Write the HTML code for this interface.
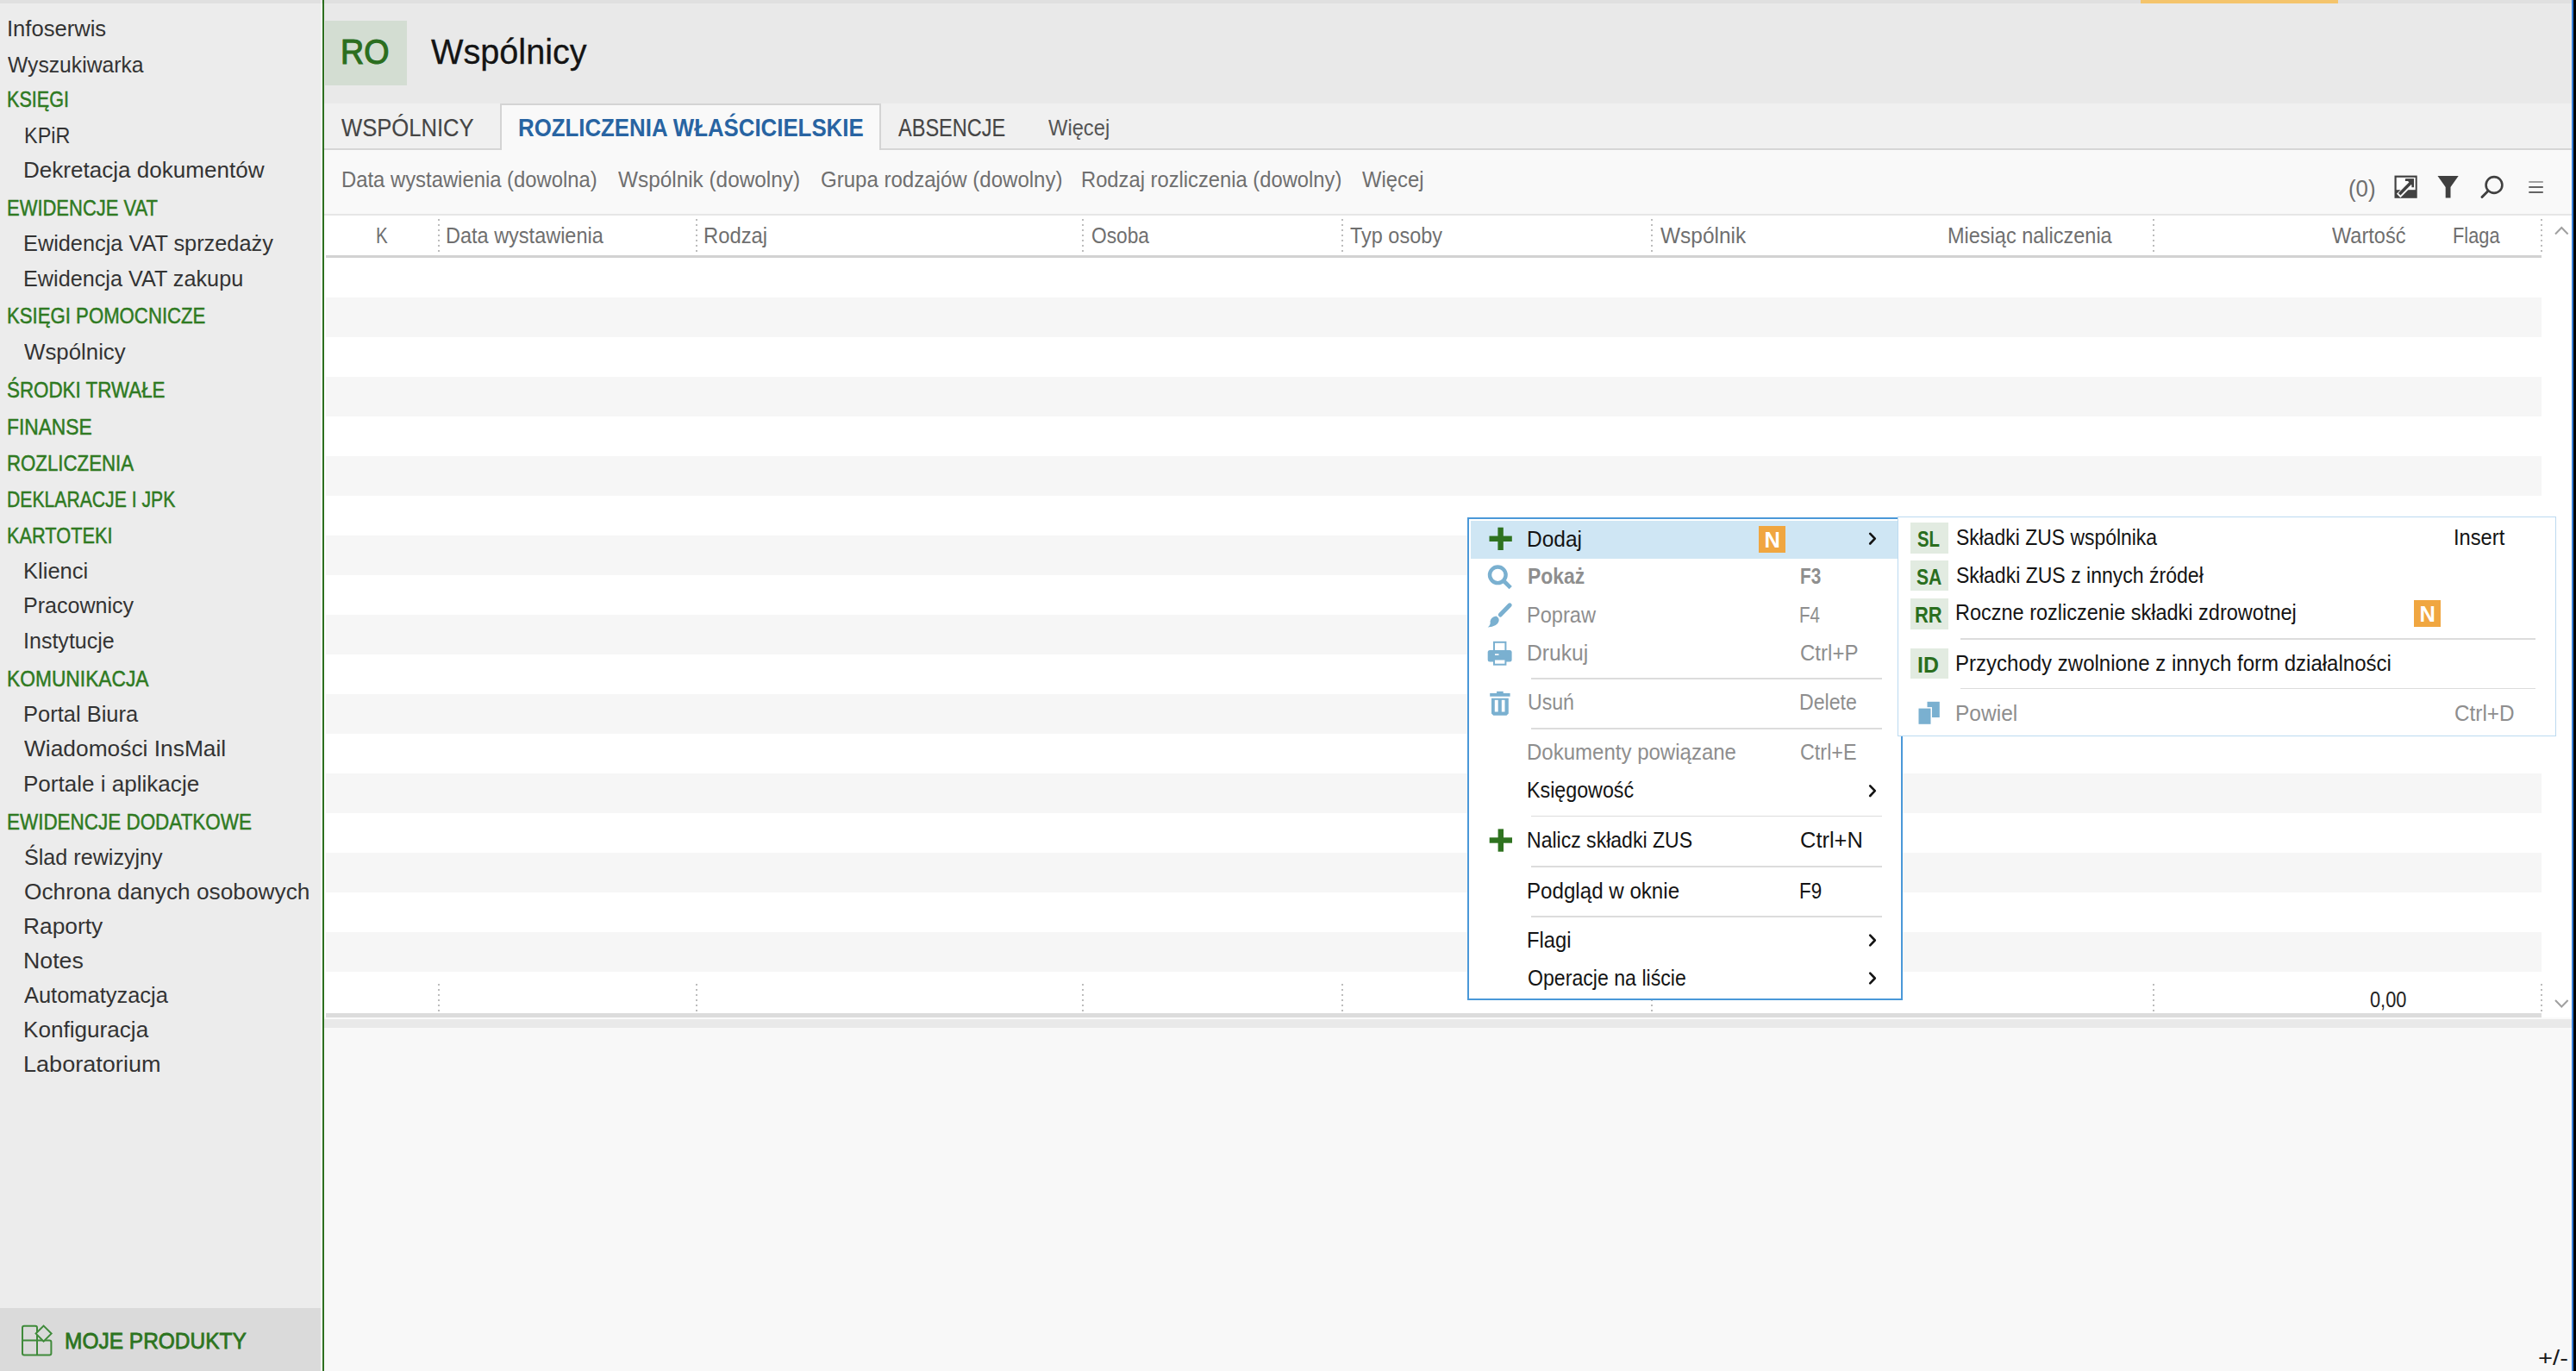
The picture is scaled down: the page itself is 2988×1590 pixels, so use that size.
<!DOCTYPE html>
<html><head><meta charset="utf-8"><title>Wspólnicy</title>
<style>
html,body{margin:0;padding:0;}
body{width:2988px;height:1590px;position:relative;overflow:hidden;background:#f8f8f8;font-family:"Liberation Sans", sans-serif;}
.b{position:absolute;}
.t{position:absolute;white-space:nowrap;transform-origin:0 0;}
svg{position:absolute;overflow:visible;}
</style></head><body>
<!-- sidebar -->
<div class="b" style="left:0;top:0;width:373px;height:1590px;background:#ececec"></div>
<div class="b" style="left:0;top:1517px;width:373px;height:73px;background:#dadada"></div>
<!-- top strip -->
<div class="b" style="left:0;top:0;width:2988px;height:3.5px;background:#e0e0e0"></div>
<!-- header -->
<div class="b" style="left:376px;top:3.5px;width:2607px;height:116.5px;background:#e9e9e9"></div>
<div class="b" style="left:2483px;top:0;width:229px;height:4px;background:#f4c46c"></div>
<div class="b" style="left:376.5px;top:23.7px;width:95.3px;height:75.6px;background:#d3ddd2"></div>
<!-- tab strip -->
<div class="b" style="left:376px;top:120px;width:2607px;height:52px;background:#f0f0f0"></div>
<div class="b" style="left:376px;top:172px;width:2607px;height:2px;background:#d6d6d6"></div>
<div class="b" style="left:579.8px;top:119.8px;width:438px;height:54.2px;background:#f9f9f9;border:2.2px solid #d4d4d4;border-bottom:none"></div>
<!-- filter row -->
<div class="b" style="left:376px;top:174px;width:2607px;height:74.5px;background:#f9f9f9"></div>
<div class="b" style="left:376px;top:247.8px;width:2607px;height:2px;background:#e6e6e6"></div>
<!-- table -->
<div class="b" style="left:376px;top:249.7px;width:2607px;height:930px;background:#ffffff"></div>
<div class="b" style="left:378px;top:296.2px;width:2570px;height:2.4px;background:#d2d2d2"></div>
<div class="b" style="left:378px;top:344.62px;width:2570px;height:46.02px;background:#f6f6f6"></div>
<div class="b" style="left:378px;top:436.67px;width:2570px;height:46.02px;background:#f6f6f6"></div>
<div class="b" style="left:378px;top:528.71px;width:2570px;height:46.02px;background:#f6f6f6"></div>
<div class="b" style="left:378px;top:620.76px;width:2570px;height:46.02px;background:#f6f6f6"></div>
<div class="b" style="left:378px;top:712.80px;width:2570px;height:46.02px;background:#f6f6f6"></div>
<div class="b" style="left:378px;top:804.84px;width:2570px;height:46.02px;background:#f6f6f6"></div>
<div class="b" style="left:378px;top:896.89px;width:2570px;height:46.02px;background:#f6f6f6"></div>
<div class="b" style="left:378px;top:988.93px;width:2570px;height:46.02px;background:#f6f6f6"></div>
<div class="b" style="left:378px;top:1080.98px;width:2570px;height:46.02px;background:#f6f6f6"></div>
<div class="b" style="left:378px;top:1175.4px;width:2570px;height:4.3px;background:#dcdcdc"></div>
<div class="b" style="left:376px;top:1179.7px;width:2607px;height:2.4px;background:#fafafa"></div>
<div class="b" style="left:376px;top:1182.1px;width:2607px;height:9.5px;background:#e9e9e9"></div>
<div class="b" style="left:507.8px;top:254px;width:2px;height:38px;background:repeating-linear-gradient(#bcbcbc 0 2px, transparent 2px 6px)"></div>
<div class="b" style="left:507.8px;top:1141px;width:2px;height:36px;background:repeating-linear-gradient(#bcbcbc 0 2px, transparent 2px 6px)"></div>
<div class="b" style="left:807.3px;top:254px;width:2px;height:38px;background:repeating-linear-gradient(#bcbcbc 0 2px, transparent 2px 6px)"></div>
<div class="b" style="left:807.3px;top:1141px;width:2px;height:36px;background:repeating-linear-gradient(#bcbcbc 0 2px, transparent 2px 6px)"></div>
<div class="b" style="left:1255.1px;top:254px;width:2px;height:38px;background:repeating-linear-gradient(#bcbcbc 0 2px, transparent 2px 6px)"></div>
<div class="b" style="left:1255.1px;top:1141px;width:2px;height:36px;background:repeating-linear-gradient(#bcbcbc 0 2px, transparent 2px 6px)"></div>
<div class="b" style="left:1555.8px;top:254px;width:2px;height:38px;background:repeating-linear-gradient(#bcbcbc 0 2px, transparent 2px 6px)"></div>
<div class="b" style="left:1555.8px;top:1141px;width:2px;height:36px;background:repeating-linear-gradient(#bcbcbc 0 2px, transparent 2px 6px)"></div>
<div class="b" style="left:1915.4px;top:254px;width:2px;height:38px;background:repeating-linear-gradient(#bcbcbc 0 2px, transparent 2px 6px)"></div>
<div class="b" style="left:1915.4px;top:1141px;width:2px;height:36px;background:repeating-linear-gradient(#bcbcbc 0 2px, transparent 2px 6px)"></div>
<div class="b" style="left:2497.3px;top:254px;width:2px;height:38px;background:repeating-linear-gradient(#bcbcbc 0 2px, transparent 2px 6px)"></div>
<div class="b" style="left:2497.3px;top:1141px;width:2px;height:36px;background:repeating-linear-gradient(#bcbcbc 0 2px, transparent 2px 6px)"></div>
<div class="b" style="left:2947.4px;top:254px;width:2px;height:38px;background:repeating-linear-gradient(#bcbcbc 0 2px, transparent 2px 6px)"></div>
<div class="b" style="left:2947.4px;top:1141px;width:2px;height:36px;background:repeating-linear-gradient(#bcbcbc 0 2px, transparent 2px 6px)"></div>
<div class="b" style="left:371.8px;top:0;width:1px;height:1590px;background:#fbf5fb"></div><div class="b" style="left:373.8px;top:0;width:2.6px;height:1590px;background:#2d6f1f"></div>
<div class="b" style="left:2983px;top:0;width:2.3px;height:1590px;background:#3a80d8"></div>
<div class="b" style="left:2985.3px;top:0;width:2.7px;height:1590px;background:#000"></div>
<!-- scroll chevrons -->
<svg style="left:0;top:0" width="2988" height="1590"><polyline points="2964,271.5 2971.3,264 2978.6,271.5" fill="none" stroke="#a0a0a0" stroke-width="2"/><polyline points="2964,1160 2971.3,1167.5 2978.6,1160" fill="none" stroke="#a0a0a0" stroke-width="2"/></svg>
<!-- toolbar icons -->
<svg style="left:0;top:0" width="2988" height="1590">
  <rect x="2777.5" y="203.6" width="26.2" height="26.2" fill="#424242"/>
  <rect x="2779.7" y="205.8" width="22" height="14.4" fill="#ffffff"/>
  <path d="M2782.2,227 L2797.5,211.5" stroke="#ffffff" stroke-width="6.2"/>
  <path d="M2783.2,225.2 L2797.3,211" stroke="#424242" stroke-width="3.6"/>
  <path d="M2789.9,208.6 L2798.7,208.6 L2798.7,217.3" fill="none" stroke="#424242" stroke-width="2.6"/>
  <path d="M2790.5,207.4 L2799.9,207.4 L2799.9,216.8 Z" fill="#424242"/>
  <path d="M2827.5,204 L2851.7,204 L2842.5,217 L2842.5,229.6 L2836.7,229.6 L2836.7,217 Z" fill="#404040"/>
  <circle cx="2893" cy="214.5" r="9.4" fill="none" stroke="#404040" stroke-width="2.6"/>
  <path d="M2885.5,222 L2879,228.5" stroke="#404040" stroke-width="3" stroke-linecap="round"/>
  <rect x="2933.3" y="210.2" width="16.5" height="1.6" fill="#8a8a8a"/>
  <rect x="2933.3" y="216.2" width="16.5" height="1.6" fill="#404040"/>
  <rect x="2933.3" y="222.2" width="16.5" height="1.6" fill="#404040"/>
</svg>
<!-- moje produkty icon -->
<svg style="left:0;top:0" width="400" height="1590">
  <g fill="none" stroke="#3f8a3a" stroke-width="2">
    <path d="M43,1554.4 L43,1539.8 Q43,1537.8 41,1537.8 L28,1537.8 Q26,1537.8 26,1539.8 L26,1569.4 Q26,1571.4 28,1571.4 L57.4,1571.4 Q59.4,1571.4 59.4,1569.4 L59.4,1556.4 Q59.4,1554.4 57.4,1554.4 Z"/>
    <path d="M26,1554.4 L43,1554.4 L43,1571.4"/>
    <path d="M50.6,1537.6 L59.6,1546.6 L50.6,1555.6 L41.6,1546.6 Z" fill="#dadada"/>
  </g>
</svg>
<!-- context menu -->
<div class="b" style="left:1701.5px;top:599.7px;width:501.5px;height:556.5px;background:#ffffff;border:2.5px solid #4a98d8"></div>
<div class="b" style="left:1706px;top:604.3px;width:494.6px;height:43.3px;background:#cfe6f4"></div>
<div class="b" style="left:2039.7px;top:609.7px;width:31.7px;height:31.7px;background:#f0a640"></div>
<div class="b" style="left:1775.7px;top:786px;width:407.7px;height:1.5px;background:#dcdcdc"></div>
<div class="b" style="left:1775.7px;top:844.2px;width:407.7px;height:1.5px;background:#dcdcdc"></div>
<div class="b" style="left:1775.7px;top:945.6px;width:407.7px;height:1.5px;background:#dcdcdc"></div>
<div class="b" style="left:1775.7px;top:1004px;width:407.7px;height:1.5px;background:#dcdcdc"></div>
<div class="b" style="left:1775.7px;top:1062px;width:407.7px;height:1.5px;background:#dcdcdc"></div>
<!-- submenu -->
<div class="b" style="left:2200.8px;top:598.7px;width:762.7px;height:253px;background:#ffffff;border:1.6px solid #bcdaf0"></div>
<div class="b" style="left:2216px;top:606px;width:43.6px;height:35.6px;background:#e2ebe1"></div>
<div class="b" style="left:2216px;top:650.2px;width:43.6px;height:35.2px;background:#e2ebe1"></div>
<div class="b" style="left:2216px;top:694px;width:43.6px;height:35.5px;background:#e2ebe1"></div>
<div class="b" style="left:2216px;top:751.7px;width:43.6px;height:35.8px;background:#e2ebe1"></div>
<div class="b" style="left:2799.7px;top:696px;width:31.6px;height:31.2px;background:#f0a640"></div>
<div class="b" style="left:2273.6px;top:740.2px;width:667.6px;height:1.5px;background:#dcdcdc"></div>
<div class="b" style="left:2273.6px;top:797.8px;width:667.6px;height:1.5px;background:#dcdcdc"></div>
<!-- menu icons -->
<svg style="left:0;top:0" width="2988" height="1590">
  <g fill="#2f7320">
    <rect x="1737.4" y="611.7" width="6.4" height="26.3"/>
    <rect x="1727.5" y="621.6" width="26.3" height="6.4"/>
    <rect x="1737.6" y="961.4" width="6.4" height="26.3"/>
    <rect x="1727.7" y="971.3" width="26.3" height="6.4"/>
  </g>
  <g fill="none" stroke="#141414" stroke-width="2.6" stroke-linejoin="round" stroke-linecap="round">
    <polyline points="2169.2,618.9 2174.8,624.7 2169.2,630.5"/>
    <polyline points="2169.2,911.4 2174.8,917.2 2169.2,923"/>
    <polyline points="2169.2,1084.7 2174.8,1090.5 2169.2,1096.3"/>
    <polyline points="2169.2,1128.7 2174.8,1134.5 2169.2,1140.3"/>
  </g>
  <g fill="#7ab0d0" stroke="none">
    <circle cx="1737.3" cy="666.8" r="9.3" fill="none" stroke="#7ab0d0" stroke-width="4.4"/>
    <path d="M1745,674.5 L1752.2,681.7" stroke="#7ab0d0" stroke-width="4.6"/>
    <path d="M1740.3,713 L1751.2,701.8" stroke="#7ab0d0" stroke-width="5" stroke-linecap="round"/>
    <path d="M1735.5,714.5 Q1739.5,716.5 1738.5,720.5 Q1737,726.5 1725.7,727.6 Q1729.5,724.5 1728.5,720.5 Q1729.5,715.5 1735.5,714.5 Z"/>
    <rect x="1733" y="744.8" width="13.4" height="11" fill="none" stroke="#7ab0d0" stroke-width="2"/>
    <rect x="1725.7" y="753.9" width="27.9" height="13.5" rx="2.5"/>
    <rect x="1733" y="764.5" width="13.4" height="6.2" fill="#fff" stroke="#7ab0d0" stroke-width="2"/>
    <rect x="1734" y="758.3" width="4.5" height="1.6" fill="#fff"/>
    <rect x="1736.1" y="801.8" width="7.6" height="2.6"/>
    <rect x="1728.2" y="803.9" width="23.4" height="3.8"/>
    <path d="M1730,809.7 L1749.8,809.7 L1749.8,827.5 L1747.5,829.8 L1732.3,829.8 L1730,827.5 Z"/>
    <rect x="1733.8" y="811.8" width="3.9" height="13.7" fill="#fff"/>
    <rect x="1741.8" y="811.8" width="3.7" height="13.7" fill="#fff"/>
    <rect x="2235.5" y="813.8" width="14.3" height="18.2"/>
    <rect x="2224" y="820.1" width="17" height="21.2" fill="#fff"/>
    <rect x="2225.5" y="821.6" width="14" height="18.2"/>
  </g>
</svg>

<div class="t" style="left:7.83px;top:20.19px;font-size:26px;line-height:26px;font-weight:400;color:#333333;transform:scaleX(0.9840)">Infoserwis</div>
<div class="t" style="left:9.00px;top:62.09px;font-size:26px;line-height:26px;font-weight:400;color:#333333;transform:scaleX(0.9493)">Wyszukiwarka</div>
<div class="t" style="left:7.94px;top:102.19px;font-size:26px;line-height:26px;font-weight:400;color:#2f7a22;transform:scaleX(0.8294);-webkit-text-stroke:0.5px #2f7a22">KSIĘGI</div>
<div class="t" style="left:27.50px;top:143.79px;font-size:26px;line-height:26px;font-weight:400;color:#333333;transform:scaleX(0.9015)">KPiR</div>
<div class="t" style="left:27.30px;top:183.79px;font-size:26px;line-height:26px;font-weight:400;color:#333333;transform:scaleX(1.0020)">Dekretacja dokumentów</div>
<div class="t" style="left:7.91px;top:228.19px;font-size:26px;line-height:26px;font-weight:400;color:#2f7a22;transform:scaleX(0.8452);-webkit-text-stroke:0.5px #2f7a22">EWIDENCJE VAT</div>
<div class="t" style="left:27.35px;top:269.19px;font-size:26px;line-height:26px;font-weight:400;color:#333333;transform:scaleX(0.9735)">Ewidencja VAT sprzedaży</div>
<div class="t" style="left:27.36px;top:309.89px;font-size:26px;line-height:26px;font-weight:400;color:#333333;transform:scaleX(0.9702)">Ewidencja VAT zakupu</div>
<div class="t" style="left:7.89px;top:353.49px;font-size:26px;line-height:26px;font-weight:400;color:#2f7a22;transform:scaleX(0.8529);-webkit-text-stroke:0.5px #2f7a22">KSIĘGI POMOCNICZE</div>
<div class="t" style="left:28.30px;top:395.19px;font-size:26px;line-height:26px;font-weight:400;color:#333333;transform:scaleX(0.9935)">Wspólnicy</div>
<div class="t" style="left:8.34px;top:439.49px;font-size:26px;line-height:26px;font-weight:400;color:#2f7a22;transform:scaleX(0.8603);-webkit-text-stroke:0.5px #2f7a22">ŚRODKI TRWAŁE</div>
<div class="t" style="left:7.85px;top:481.59px;font-size:26px;line-height:26px;font-weight:400;color:#2f7a22;transform:scaleX(0.8755);-webkit-text-stroke:0.5px #2f7a22">FINANSE</div>
<div class="t" style="left:7.89px;top:523.69px;font-size:26px;line-height:26px;font-weight:400;color:#2f7a22;transform:scaleX(0.8554);-webkit-text-stroke:0.5px #2f7a22">ROZLICZENIA</div>
<div class="t" style="left:7.97px;top:565.99px;font-size:26px;line-height:26px;font-weight:400;color:#2f7a22;transform:scaleX(0.8142);-webkit-text-stroke:0.5px #2f7a22">DEKLARACJE I JPK</div>
<div class="t" style="left:7.93px;top:607.69px;font-size:26px;line-height:26px;font-weight:400;color:#2f7a22;transform:scaleX(0.8369);-webkit-text-stroke:0.5px #2f7a22">KARTOTEKI</div>
<div class="t" style="left:27.34px;top:649.39px;font-size:26px;line-height:26px;font-weight:400;color:#333333;transform:scaleX(0.9822)">Klienci</div>
<div class="t" style="left:27.37px;top:689.39px;font-size:26px;line-height:26px;font-weight:400;color:#333333;transform:scaleX(0.9639)">Pracownicy</div>
<div class="t" style="left:27.37px;top:730.19px;font-size:26px;line-height:26px;font-weight:400;color:#333333;transform:scaleX(0.9631)">Instytucje</div>
<div class="t" style="left:7.85px;top:773.79px;font-size:26px;line-height:26px;font-weight:400;color:#2f7a22;transform:scaleX(0.8763);-webkit-text-stroke:0.5px #2f7a22">KOMUNIKACJA</div>
<div class="t" style="left:27.34px;top:815.49px;font-size:26px;line-height:26px;font-weight:400;color:#333333;transform:scaleX(0.9801)">Portal Biura</div>
<div class="t" style="left:28.30px;top:855.19px;font-size:26px;line-height:26px;font-weight:400;color:#333333;transform:scaleX(1.0131)">Wiadomości InsMail</div>
<div class="t" style="left:27.30px;top:896.19px;font-size:26px;line-height:26px;font-weight:400;color:#333333;transform:scaleX(1.0019)">Portale i aplikacje</div>
<div class="t" style="left:7.87px;top:939.89px;font-size:26px;line-height:26px;font-weight:400;color:#2f7a22;transform:scaleX(0.8634);-webkit-text-stroke:0.5px #2f7a22">EWIDENCJE DODATKOWE</div>
<div class="t" style="left:28.33px;top:981.19px;font-size:26px;line-height:26px;font-weight:400;color:#333333;transform:scaleX(0.9669)">Ślad rewizyjny</div>
<div class="t" style="left:27.79px;top:1021.19px;font-size:26px;line-height:26px;font-weight:400;color:#333333;transform:scaleX(1.0101)">Ochrona danych osobowych</div>
<div class="t" style="left:27.27px;top:1061.19px;font-size:26px;line-height:26px;font-weight:400;color:#333333;transform:scaleX(1.0130)">Raporty</div>
<div class="t" style="left:27.25px;top:1101.19px;font-size:26px;line-height:26px;font-weight:400;color:#333333;transform:scaleX(1.0270)">Notes</div>
<div class="t" style="left:28.20px;top:1140.79px;font-size:26px;line-height:26px;font-weight:400;color:#333333;transform:scaleX(0.9786)">Automatyzacja</div>
<div class="t" style="left:27.29px;top:1181.19px;font-size:26px;line-height:26px;font-weight:400;color:#333333;transform:scaleX(1.0044)">Konfiguracja</div>
<div class="t" style="left:27.22px;top:1220.89px;font-size:26px;line-height:26px;font-weight:400;color:#333333;transform:scaleX(1.0412)">Laboratorium</div>
<div class="t" style="left:74.82px;top:1541.69px;font-size:26px;line-height:26px;font-weight:400;color:#2c7420;transform:scaleX(0.9415);-webkit-text-stroke:0.8px #2c7420">MOJE PRODUKTY</div>
<div class="t" style="left:394.68px;top:40.14px;font-size:40px;line-height:40px;font-weight:400;color:#2b6e1f;transform:scaleX(0.9394);-webkit-text-stroke:1.2px #2b6e1f">RO</div>
<div class="t" style="left:500.00px;top:40.14px;font-size:40px;line-height:40px;font-weight:400;color:#141414;transform:scaleX(0.9914);-webkit-text-stroke:0.3px #141414">Wspólnicy</div>
<div class="t" style="left:395.70px;top:133.95px;font-size:29px;line-height:29px;font-weight:400;color:#454545;transform:scaleX(0.8826);-webkit-text-stroke:0.15px #454545">WSPÓLNICY</div>
<div class="t" style="left:600.51px;top:133.75px;font-size:29px;line-height:29px;font-weight:700;color:#2864a2;transform:scaleX(0.8903)">ROZLICZENIA WŁAŚCICIELSKIE</div>
<div class="t" style="left:1041.70px;top:133.95px;font-size:29px;line-height:29px;font-weight:400;color:#454545;transform:scaleX(0.8117);-webkit-text-stroke:0.15px #454545">ABSENCJE</div>
<div class="t" style="left:1215.60px;top:135.61px;font-size:25.5px;line-height:25.5px;font-weight:400;color:#555555;transform:scaleX(0.9299)">Więcej</div>
<div class="t" style="left:395.63px;top:196.41px;font-size:25.5px;line-height:25.5px;font-weight:400;color:#6f6f6f;transform:scaleX(0.9347)">Data wystawienia (dowolna)</div>
<div class="t" style="left:716.60px;top:196.41px;font-size:25.5px;line-height:25.5px;font-weight:400;color:#6f6f6f;transform:scaleX(0.9546)">Wspólnik (dowolny)</div>
<div class="t" style="left:951.66px;top:196.41px;font-size:25.5px;line-height:25.5px;font-weight:400;color:#6f6f6f;transform:scaleX(0.9423)">Grupa rodzajów (dowolny)</div>
<div class="t" style="left:1253.94px;top:196.41px;font-size:25.5px;line-height:25.5px;font-weight:400;color:#6f6f6f;transform:scaleX(0.9316)">Rodzaj rozliczenia (dowolny)</div>
<div class="t" style="left:1580.00px;top:196.41px;font-size:25.5px;line-height:25.5px;font-weight:400;color:#6f6f6f;transform:scaleX(0.9352)">Więcej</div>
<div class="t" style="left:2723.66px;top:204.82px;font-size:27.5px;line-height:27.5px;font-weight:400;color:#6f6f6f;transform:scaleX(0.9411)">(0)</div>
<div class="t" style="left:435.89px;top:260.51px;font-size:25.5px;line-height:25.5px;font-weight:400;color:#6f6f6f;transform:scaleX(0.8067)">K</div>
<div class="t" style="left:517.46px;top:260.51px;font-size:25.5px;line-height:25.5px;font-weight:400;color:#6f6f6f;transform:scaleX(0.9212)">Data wystawienia</div>
<div class="t" style="left:816.13px;top:260.51px;font-size:25.5px;line-height:25.5px;font-weight:400;color:#6f6f6f;transform:scaleX(0.9338)">Rodzaj</div>
<div class="t" style="left:1265.51px;top:260.51px;font-size:25.5px;line-height:25.5px;font-weight:400;color:#6f6f6f;transform:scaleX(0.8913)">Osoba</div>
<div class="t" style="left:1566.00px;top:260.51px;font-size:25.5px;line-height:25.5px;font-weight:400;color:#6f6f6f;transform:scaleX(0.9203)">Typ osoby</div>
<div class="t" style="left:1926.30px;top:260.51px;font-size:25.5px;line-height:25.5px;font-weight:400;color:#6f6f6f;transform:scaleX(0.9586)">Wspólnik</div>
<div class="t" style="left:2259.36px;top:260.51px;font-size:25.5px;line-height:25.5px;font-weight:400;color:#6f6f6f;transform:scaleX(0.9215)">Miesiąc naliczenia</div>
<div class="t" style="left:2704.70px;top:260.51px;font-size:25.5px;line-height:25.5px;font-weight:400;color:#6f6f6f;transform:scaleX(0.9234)">Wartość</div>
<div class="t" style="left:2845.29px;top:260.51px;font-size:25.5px;line-height:25.5px;font-weight:400;color:#6f6f6f;transform:scaleX(0.8546)">Flaga</div>
<div class="t" style="left:2749.47px;top:1146.12px;font-size:26.2px;line-height:26.2px;font-weight:400;color:#222222;transform:scaleX(0.8319)">0,00</div>
<div class="t" style="left:2943.93px;top:1564.23px;font-size:23px;line-height:23px;font-weight:400;color:#1a1a1a;transform:scaleX(1.2702)">+/-</div>
<div class="t" style="left:1770.78px;top:612.71px;font-size:25.5px;line-height:25.5px;font-weight:400;color:#141414;transform:scaleX(0.9609)">Dodaj</div>
<div class="t" style="left:1771.80px;top:656.11px;font-size:25.5px;line-height:25.5px;font-weight:700;color:#8e8e8e;transform:scaleX(0.8979)">Pokaż</div>
<div class="t" style="left:2087.79px;top:656.11px;font-size:25.5px;line-height:25.5px;font-weight:700;color:#8e8e8e;transform:scaleX(0.8119)">F3</div>
<div class="t" style="left:1770.85px;top:700.51px;font-size:25.5px;line-height:25.5px;font-weight:400;color:#8e8e8e;transform:scaleX(0.9254)">Popraw</div>
<div class="t" style="left:2086.99px;top:700.51px;font-size:25.5px;line-height:25.5px;font-weight:400;color:#8e8e8e;transform:scaleX(0.8050)">F4</div>
<div class="t" style="left:1770.77px;top:744.91px;font-size:25.5px;line-height:25.5px;font-weight:400;color:#8e8e8e;transform:scaleX(0.9654)">Drukuj</div>
<div class="t" style="left:2087.66px;top:744.91px;font-size:25.5px;line-height:25.5px;font-weight:400;color:#8e8e8e;transform:scaleX(0.9432)">Ctrl+P</div>
<div class="t" style="left:1771.79px;top:802.31px;font-size:25.5px;line-height:25.5px;font-weight:400;color:#8e8e8e;transform:scaleX(0.9068)">Usuń</div>
<div class="t" style="left:2087.09px;top:802.31px;font-size:25.5px;line-height:25.5px;font-weight:400;color:#8e8e8e;transform:scaleX(0.9073)">Delete</div>
<div class="t" style="left:1770.82px;top:860.01px;font-size:25.5px;line-height:25.5px;font-weight:400;color:#8e8e8e;transform:scaleX(0.9418)">Dokumenty powiązane</div>
<div class="t" style="left:2087.98px;top:860.01px;font-size:25.5px;line-height:25.5px;font-weight:400;color:#8e8e8e;transform:scaleX(0.9159)">Ctrl+E</div>
<div class="t" style="left:1771.18px;top:904.31px;font-size:25.5px;line-height:25.5px;font-weight:400;color:#141414;transform:scaleX(0.9120)">Księgowość</div>
<div class="t" style="left:1771.19px;top:962.21px;font-size:25.5px;line-height:25.5px;font-weight:400;color:#141414;transform:scaleX(0.9034)">Nalicz składki ZUS</div>
<div class="t" style="left:2087.80px;top:962.21px;font-size:25.5px;line-height:25.5px;font-weight:400;color:#141414;transform:scaleX(0.9979)">Ctrl+N</div>
<div class="t" style="left:1771.11px;top:1020.91px;font-size:25.5px;line-height:25.5px;font-weight:400;color:#141414;transform:scaleX(0.9462)">Podgląd w oknie</div>
<div class="t" style="left:2087.04px;top:1020.91px;font-size:25.5px;line-height:25.5px;font-weight:400;color:#141414;transform:scaleX(0.8805)">F9</div>
<div class="t" style="left:1771.14px;top:1078.21px;font-size:25.5px;line-height:25.5px;font-weight:400;color:#141414;transform:scaleX(0.9321)">Flagi</div>
<div class="t" style="left:1772.09px;top:1122.01px;font-size:25.5px;line-height:25.5px;font-weight:400;color:#141414;transform:scaleX(0.9067)">Operacje na liście</div>
<div class="t" style="left:2269.10px;top:610.61px;font-size:25.5px;line-height:25.5px;font-weight:400;color:#141414;transform:scaleX(0.8987)">Składki ZUS wspólnika</div>
<div class="t" style="left:2846.44px;top:610.61px;font-size:25.5px;line-height:25.5px;font-weight:400;color:#141414;transform:scaleX(0.9288)">Insert</div>
<div class="t" style="left:2269.10px;top:654.61px;font-size:25.5px;line-height:25.5px;font-weight:400;color:#141414;transform:scaleX(0.9034)">Składki ZUS z innych źródeł</div>
<div class="t" style="left:2268.16px;top:698.01px;font-size:25.5px;line-height:25.5px;font-weight:400;color:#141414;transform:scaleX(0.9216)">Roczne rozliczenie składki zdrowotnej</div>
<div class="t" style="left:2268.12px;top:756.81px;font-size:25.5px;line-height:25.5px;font-weight:400;color:#141414;transform:scaleX(0.9417)">Przychody zwolnione z innych form działalności</div>
<div class="t" style="left:2268.08px;top:815.11px;font-size:25.5px;line-height:25.5px;font-weight:400;color:#8e8e8e;transform:scaleX(0.9615)">Powiel</div>
<div class="t" style="left:2847.35px;top:815.11px;font-size:25.5px;line-height:25.5px;font-weight:400;color:#8e8e8e;transform:scaleX(0.9532)">Ctrl+D</div>
<div class="t" style="left:2223.70px;top:613.11px;font-size:25.5px;line-height:25.5px;font-weight:700;color:#2a6e1e;transform:scaleX(0.7967)">SL</div>
<div class="t" style="left:2222.50px;top:656.91px;font-size:25.5px;line-height:25.5px;font-weight:700;color:#2a6e1e;transform:scaleX(0.8284)">SA</div>
<div class="t" style="left:2221.14px;top:700.91px;font-size:25.5px;line-height:25.5px;font-weight:700;color:#2a6e1e;transform:scaleX(0.8612)">RR</div>
<div class="t" style="left:2224.02px;top:758.91px;font-size:25.5px;line-height:25.5px;font-weight:700;color:#2a6e1e;transform:scaleX(0.9757)">ID</div>
<div class="t" style="left:2046.50px;top:613.91px;font-size:25.5px;line-height:25.5px;font-weight:700;color:#ffffff;transform:scaleX(1.0000)">N</div>
<div class="t" style="left:2806.50px;top:699.91px;font-size:25.5px;line-height:25.5px;font-weight:700;color:#ffffff;transform:scaleX(1.0000)">N</div>
</body></html>
